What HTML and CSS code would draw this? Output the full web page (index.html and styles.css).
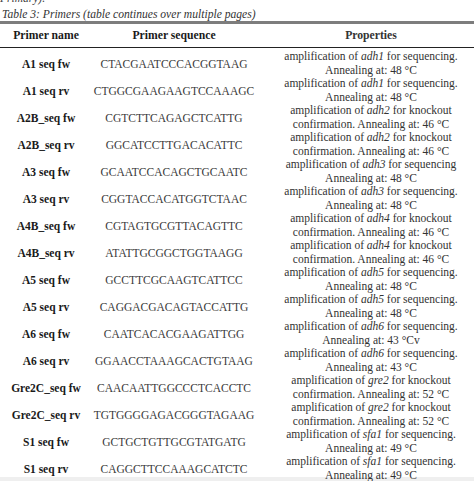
FILE: index.html
```html
<!DOCTYPE html>
<html>
<head>
<meta charset="utf-8">
<link rel="stylesheet" href="styles.css">
</head>
<body>
<p class="prev">Primary).</p>
<p class="caption">Table 3: Primers (table continues over multiple pages)</p>
<div class="tbl">
  <div class="row head">
    <div>Primer name</div>
    <div>Primer sequence</div>
    <div class="prop">Properties</div>
  </div>
  <div class="rows">
    <div class="row"><div class="name">A1 seq fw</div><div class="seq">CTACGAATCCCACGGTAAG</div><div class="prop">amplification of <i>adh1</i> for sequencing.<br>Annealing at: 48 °C</div></div>
    <div class="row"><div class="name">A1 seq rv</div><div class="seq">CTGGCGAAGAAGTCCAAAGC</div><div class="prop">amplification of <i>adh1</i> for sequencing.<br>Annealing at: 48 °C</div></div>
    <div class="row"><div class="name">A2B_seq fw</div><div class="seq">CGTCTTCAGAGCTCATTG</div><div class="prop">amplification of <i>adh2</i> for knockout<br>confirmation. Annealing at: 46 °C</div></div>
    <div class="row"><div class="name">A2B_seq rv</div><div class="seq">GGCATCCTTGACACATTC</div><div class="prop">amplification of <i>adh2</i> for knockout<br>confirmation. Annealing at: 46 °C</div></div>
    <div class="row"><div class="name">A3 seq fw</div><div class="seq">GCAATCCACAGCTGCAATC</div><div class="prop">amplification of <i>adh3</i> for sequencing<br>Annealing at: 48 °C</div></div>
    <div class="row"><div class="name">A3 seq rv</div><div class="seq">CGGTACCACATGGTCTAAC</div><div class="prop">amplification of <i>adh3</i> for sequencing.<br>Annealing at: 48 °C</div></div>
    <div class="row"><div class="name">A4B_seq fw</div><div class="seq">CGTAGTGCGTTACAGTTC</div><div class="prop">amplification of <i>adh4</i> for knockout<br>confirmation. Annealing at: 46 °C</div></div>
    <div class="row"><div class="name">A4B_seq rv</div><div class="seq">ATATTGCGGCTGGTAAGG</div><div class="prop">amplification of <i>adh4</i> for knockout<br>confirmation. Annealing at: 46 °C</div></div>
    <div class="row"><div class="name">A5 seq fw</div><div class="seq">GCCTTCGCAAGTCATTCC</div><div class="prop">amplification of <i>adh5</i> for sequencing.<br>Annealing at: 48 °C</div></div>
    <div class="row"><div class="name">A5 seq rv</div><div class="seq">CAGGACGACAGTACCATTG</div><div class="prop">amplification of <i>adh5</i> for sequencing.<br>Annealing at: 48 °C</div></div>
    <div class="row"><div class="name">A6 seq fw</div><div class="seq">CAATCACACGAAGATTGG</div><div class="prop">amplification of <i>adh6</i> for sequencing.<br>Annealing at: 43 °Cv</div></div>
    <div class="row"><div class="name">A6 seq rv</div><div class="seq">GGAACCTAAAGCACTGTAAG</div><div class="prop">amplification of <i>adh6</i> for sequencing.<br>Annealing at: 43 °C</div></div>
    <div class="row"><div class="name">Gre2C_seq fw</div><div class="seq">CAACAATTGGCCCTCACCTC</div><div class="prop">amplification of <i>gre2</i> for knockout<br>confirmation. Annealing at: 52 °C</div></div>
    <div class="row"><div class="name">Gre2C_seq rv</div><div class="seq">TGTGGGGAGACGGGTAGAAG</div><div class="prop">amplification of <i>gre2</i> for knockout<br>confirmation. Annealing at: 52 °C</div></div>
    <div class="row"><div class="name">S1 seq fw</div><div class="seq">GCTGCTGTTGCGTATGATG</div><div class="prop">amplification of <i>sfa1</i> for sequencing.<br>Annealing at: 49 °C</div></div>
    <div class="row"><div class="name">S1 seq rv</div><div class="seq">CAGGCTTCCAAAGCATCTC</div><div class="prop">amplification of <i>sfa1</i> for sequencing.<br>Annealing at: 49 °C</div></div>
  </div>
</div>
</body>
</html>
```
FILE: styles.css
```css
html {
  background: linear-gradient(#ffffff 0 477px, #efefef 477px) no-repeat;
  background-size: 100% 481px;
}
body {
  margin: 0;
  font-family: "Liberation Serif", "Times New Roman", serif;
  font-size: 11.5px;
  color: #333;
  overflow: hidden;
  height: 481px;
}
.prev {
  margin: -8px 0 0 0;
  line-height: 13px;
  font-style: italic;
  color: #444;
}
.caption {
  margin: 3px 0 0 2px;
  line-height: 13px;
  font-size: 11.6px;
  font-style: italic;
  color: #333;
}
.tbl {
  width: 474px;
}
.row {
  display: grid;
  grid-template-columns: 92px 164px 218px;
  align-items: center;
  text-align: center;
}
.head {
  height: 23px;
  border-top: 3px solid #7d7d7d;
  border-bottom: 1px solid #222;
  font-weight: bold;
  font-size: 11.7px;
  color: #1a1a1a;
  line-height: 13px;
}
.rows {
  padding-top: 2px;
}
.rows .row {
  height: 27px;
}
.name {
  font-weight: bold;
  color: #1a1a1a;
  white-space: nowrap;
}
.seq {
  color: #3a3a3a;
  white-space: nowrap;
}
.prop {
  padding-left: 12px;
  line-height: 13.5px;
  white-space: nowrap;
  color: #333;
}
```
